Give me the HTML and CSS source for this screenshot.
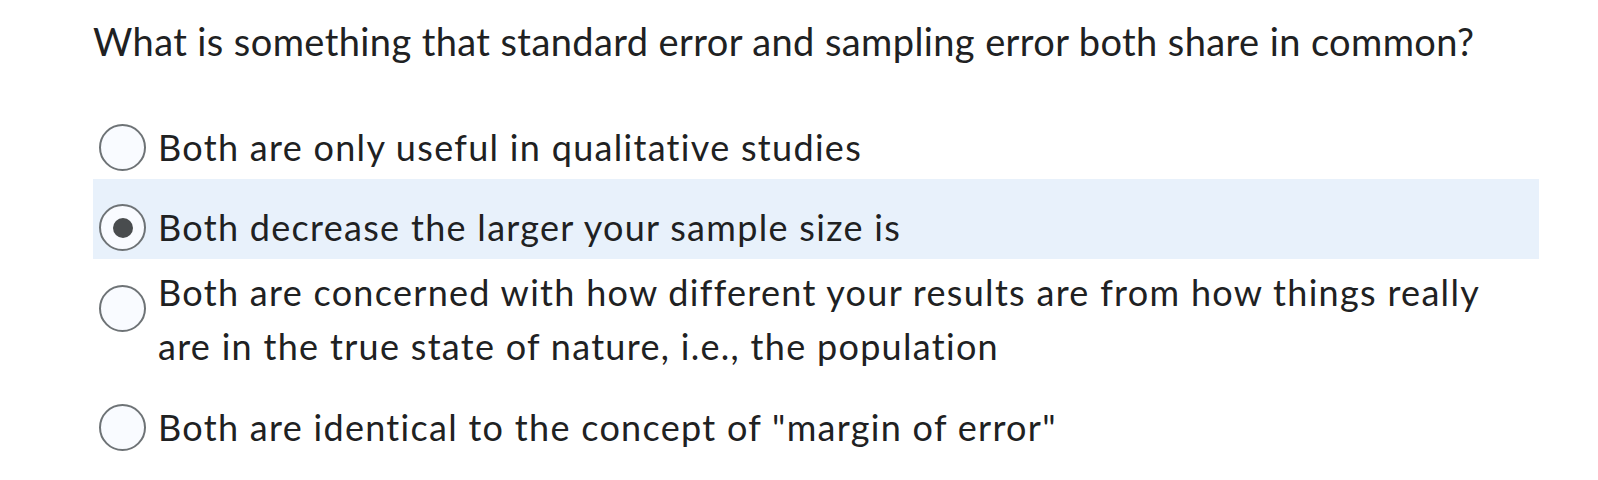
FILE: index.html
```html
<!DOCTYPE html>
<html lang="en">
<head>
<meta charset="utf-8">
<title>Question</title>
<link rel="stylesheet" href="styles.css">
</head>
<body>
<main class="quiz">
  <p class="question">What is something that standard error and sampling error both share in common?</p>
  <div class="options" role="radiogroup">
    <label class="option">
      <span class="radio"></span>
      <span class="option-text">Both are only useful in qualitative studies</span>
    </label>
    <label class="option option--selected">
      <span class="radio radio--checked"></span>
      <span class="option-text">Both decrease the larger your sample size is</span>
    </label>
    <label class="option option--multi">
      <span class="radio"></span>
      <span class="option-text">Both are concerned with how different your results are from how things really are in the true state of nature, i.e., the population</span>
    </label>
    <label class="option">
      <span class="radio"></span>
      <span class="option-text">Both are identical to the concept of "margin of error"</span>
    </label>
  </div>
</main>
</body>
</html>
```

FILE: styles.css
```css
html, body {
  margin: 0;
  padding: 0;
  background: #ffffff;
}

body {
  font-family: Lato, "Noto Sans", sans-serif;
  color: #202122;
  font-variant-ligatures: none;
}

.quiz {
  width: 1446px;
  padding: 13px 0 0 93px;
}

.question {
  margin: 0 0 29px;
  font-size: 38px;
  line-height: 57px;
  font-weight: 400;
  letter-spacing: 0.4px;
}

.options {
  display: flex;
  flex-direction: column;
}

.option {
  display: flex;
  align-items: flex-start;
  gap: 12px;
  padding: 21px 6px 5px;
  font-size: 36px;
  line-height: 54px;
  letter-spacing: 1.3px;
}

.option--selected {
  background: #e8f1fb;
}

.option--multi {
  padding-top: 6px;
  padding-bottom: 6px;
}

.radio {
  flex: 0 0 auto;
  box-sizing: border-box;
  width: 47px;
  height: 47px;
  margin-top: 4px;
  border: 2px solid #6e7376;
  border-radius: 50%;
  background: #f9fbff;
  display: flex;
  align-items: center;
  justify-content: center;
}

.option--multi .radio {
  margin-top: 20px;
}

.radio--checked::after {
  content: "";
  width: 20px;
  height: 20px;
  border-radius: 50%;
  background: #494c4e;
}

.option-text {
  flex: 1 1 auto;
}
```
